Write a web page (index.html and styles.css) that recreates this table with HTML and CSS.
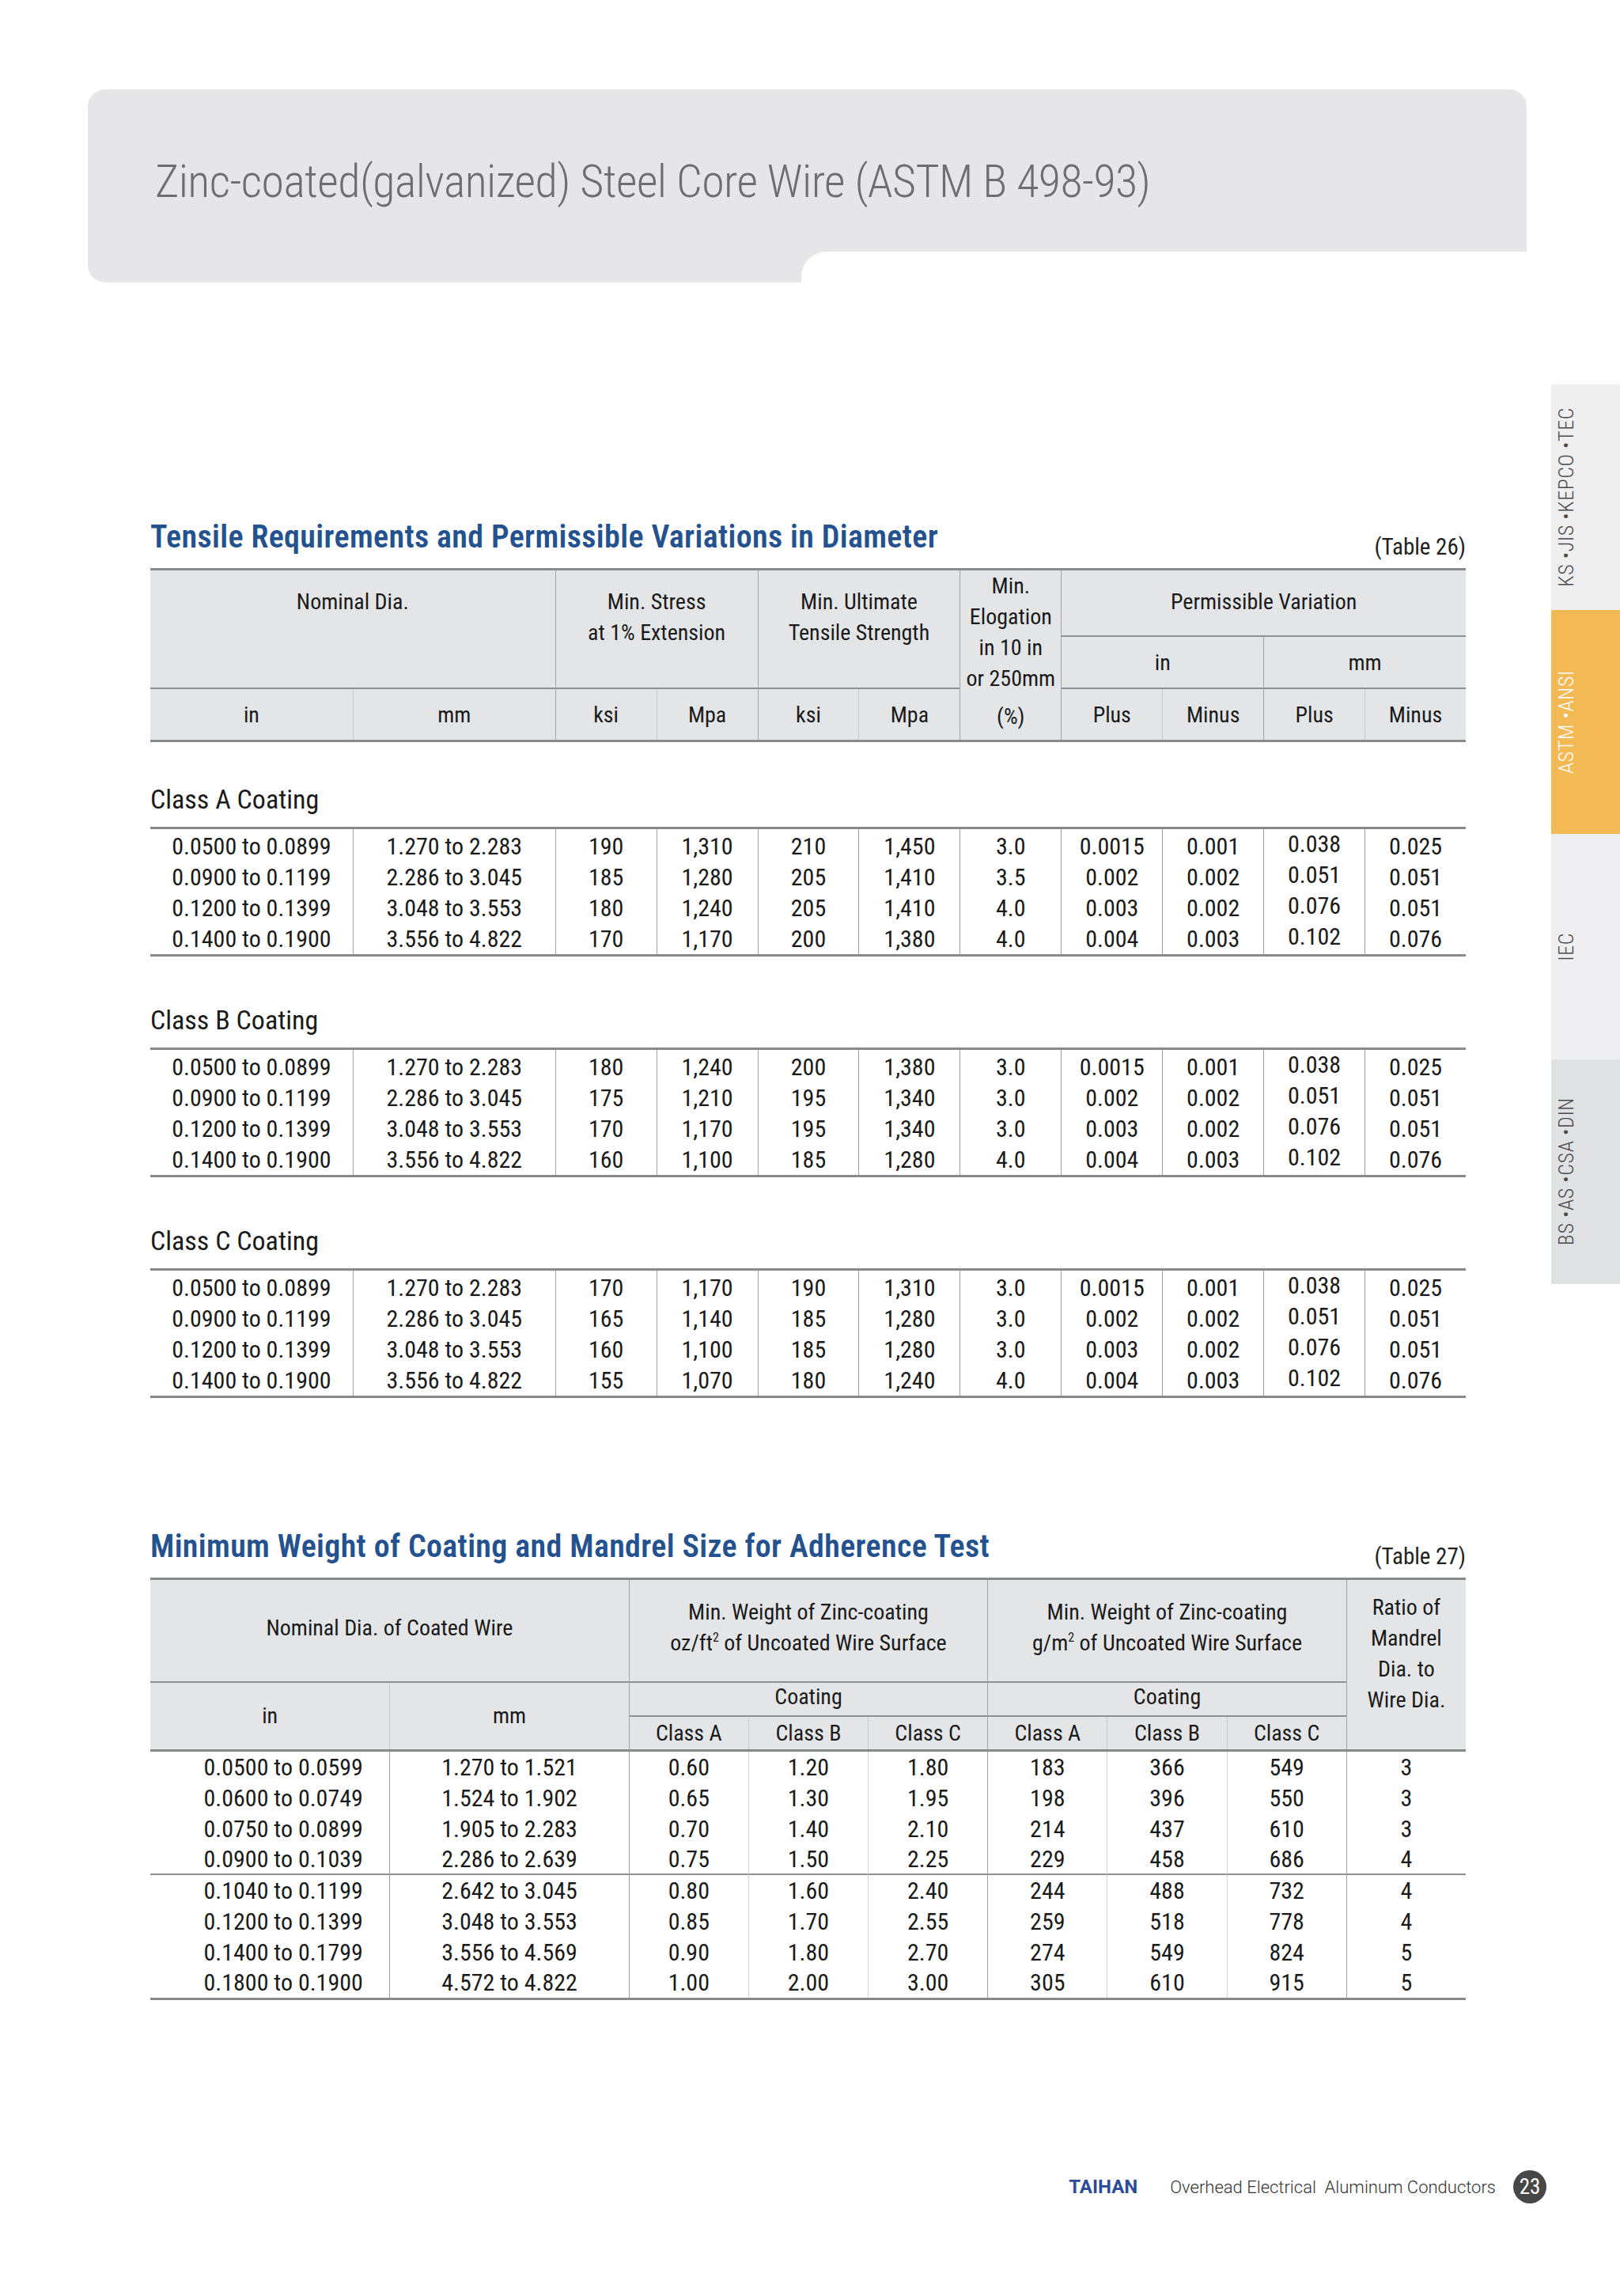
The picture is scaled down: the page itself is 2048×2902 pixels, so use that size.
FILE: index.html
```html
<!DOCTYPE html>
<html lang="en">
<head>
<meta charset="utf-8">
<title>Zinc-coated(galvanized) Steel Core Wire (ASTM B 498-93)</title>
<link rel="stylesheet" href="styles.css">
</head>
<body>
<div class="page">
  <main class="main">
    <header class="hero">
      <h1 class="hero-title">Zinc-coated(galvanized) Steel Core Wire (ASTM B 498-93)</h1>
    </header>

    <section class="sec sec1">
      <div class="sec-head">
        <h2 class="sec-title">Tensile Requirements and Permissible Variations in Diameter</h2>
        <span class="tbl-no">(Table 26)</span>
      </div>
      <table class="t t1 head">
        <colgroup><col class="w2"><col class="w2"><col class="w1"><col class="w1"><col class="w1"><col class="w1"><col class="w1"><col class="w1"><col class="w1"><col class="w1"><col class="w1"></colgroup>
        <tr class="r1">
          <th colspan="2" rowspan="2" class="first tall">Nominal Dia.</th>
          <th colspan="2" rowspan="2" class="tall">Min. Stress<br>at 1% Extension</th>
          <th colspan="2" rowspan="2" class="tall">Min. Ultimate<br>Tensile Strength</th>
          <th rowspan="3" class="elong">Min.<br>Elogation<br>in 10 in<br>or 250mm<span class="pct">(%)</span></th>
          <th colspan="4" class="pv">Permissible Variation</th>
        </tr>
        <tr class="r2">
          <th colspan="2" class="sub">in</th>
          <th colspan="2" class="sub">mm</th>
        </tr>
        <tr class="r3">
          <th class="first">in</th><th class="light">mm</th><th>ksi</th><th class="light">Mpa</th><th>ksi</th><th class="light">Mpa</th><th>Plus</th><th class="light">Minus</th><th>Plus</th><th class="light">Minus</th>
        </tr>
      </table>

      <div class="cls cls-a">Class A Coating</div>
      <table class="t t1 data">
        <colgroup><col class="w2"><col class="w2"><col class="w1"><col class="w1"><col class="w1"><col class="w1"><col class="w1"><col class="w1"><col class="w1"><col class="w1"><col class="w1"></colgroup>
        <tr><td>0.0500 to 0.0899</td><td>1.270 to 2.283</td><td>190</td><td>1,310</td><td>210</td><td>1,450</td><td>3.0</td><td>0.0015</td><td>0.001</td><td class="up"><span>0.038</span></td><td>0.025</td></tr>
        <tr><td>0.0900 to 0.1199</td><td>2.286 to 3.045</td><td>185</td><td>1,280</td><td>205</td><td>1,410</td><td>3.5</td><td>0.002</td><td>0.002</td><td class="up"><span>0.051</span></td><td>0.051</td></tr>
        <tr><td>0.1200 to 0.1399</td><td>3.048 to 3.553</td><td>180</td><td>1,240</td><td>205</td><td>1,410</td><td>4.0</td><td>0.003</td><td>0.002</td><td class="up"><span>0.076</span></td><td>0.051</td></tr>
        <tr><td>0.1400 to 0.1900</td><td>3.556 to 4.822</td><td>170</td><td>1,170</td><td>200</td><td>1,380</td><td>4.0</td><td>0.004</td><td>0.003</td><td class="up"><span>0.102</span></td><td>0.076</td></tr>
      </table>

      <div class="cls">Class B Coating</div>
      <table class="t t1 data">
        <colgroup><col class="w2"><col class="w2"><col class="w1"><col class="w1"><col class="w1"><col class="w1"><col class="w1"><col class="w1"><col class="w1"><col class="w1"><col class="w1"></colgroup>
        <tr><td>0.0500 to 0.0899</td><td>1.270 to 2.283</td><td>180</td><td>1,240</td><td>200</td><td>1,380</td><td>3.0</td><td>0.0015</td><td>0.001</td><td class="up"><span>0.038</span></td><td>0.025</td></tr>
        <tr><td>0.0900 to 0.1199</td><td>2.286 to 3.045</td><td>175</td><td>1,210</td><td>195</td><td>1,340</td><td>3.0</td><td>0.002</td><td>0.002</td><td class="up"><span>0.051</span></td><td>0.051</td></tr>
        <tr><td>0.1200 to 0.1399</td><td>3.048 to 3.553</td><td>170</td><td>1,170</td><td>195</td><td>1,340</td><td>3.0</td><td>0.003</td><td>0.002</td><td class="up"><span>0.076</span></td><td>0.051</td></tr>
        <tr><td>0.1400 to 0.1900</td><td>3.556 to 4.822</td><td>160</td><td>1,100</td><td>185</td><td>1,280</td><td>4.0</td><td>0.004</td><td>0.003</td><td class="up"><span>0.102</span></td><td>0.076</td></tr>
      </table>

      <div class="cls">Class C Coating</div>
      <table class="t t1 data">
        <colgroup><col class="w2"><col class="w2"><col class="w1"><col class="w1"><col class="w1"><col class="w1"><col class="w1"><col class="w1"><col class="w1"><col class="w1"><col class="w1"></colgroup>
        <tr><td>0.0500 to 0.0899</td><td>1.270 to 2.283</td><td>170</td><td>1,170</td><td>190</td><td>1,310</td><td>3.0</td><td>0.0015</td><td>0.001</td><td class="up"><span>0.038</span></td><td>0.025</td></tr>
        <tr><td>0.0900 to 0.1199</td><td>2.286 to 3.045</td><td>165</td><td>1,140</td><td>185</td><td>1,280</td><td>3.0</td><td>0.002</td><td>0.002</td><td class="up"><span>0.051</span></td><td>0.051</td></tr>
        <tr><td>0.1200 to 0.1399</td><td>3.048 to 3.553</td><td>160</td><td>1,100</td><td>185</td><td>1,280</td><td>3.0</td><td>0.003</td><td>0.002</td><td class="up"><span>0.076</span></td><td>0.051</td></tr>
        <tr><td>0.1400 to 0.1900</td><td>3.556 to 4.822</td><td>155</td><td>1,070</td><td>180</td><td>1,240</td><td>4.0</td><td>0.004</td><td>0.003</td><td class="up"><span>0.102</span></td><td>0.076</td></tr>
      </table>
    </section>

    <section class="sec sec2">
      <div class="sec-head">
        <h2 class="sec-title">Minimum Weight of Coating and Mandrel Size for Adherence Test</h2>
        <span class="tbl-no">(Table 27)</span>
      </div>
      <table class="t t2 head">
        <colgroup><col class="v2"><col class="v2"><col class="v1"><col class="v1"><col class="v1"><col class="v1"><col class="v1"><col class="v1"><col class="v1"></colgroup>
        <tr class="q1">
          <th colspan="2" class="first nom">Nominal Dia. of Coated Wire</th>
          <th colspan="3" class="mw">Min. Weight of Zinc-coating<br>oz/ft<sup>2</sup> of Uncoated Wire Surface</th>
          <th colspan="3" class="mw">Min. Weight of Zinc-coating<br>g/m<sup>2</sup> of Uncoated Wire Surface</th>
          <th rowspan="3" class="ratio">Ratio of<br>Mandrel<br>Dia. to<br>Wire Dia.</th>
        </tr>
        <tr class="q2">
          <th rowspan="2" class="first unit">in</th>
          <th rowspan="2" class="unit light">mm</th>
          <th colspan="3" class="coat">Coating</th>
          <th colspan="3" class="coat">Coating</th>
        </tr>
        <tr class="q3">
          <th>Class A</th><th class="light">Class B</th><th class="light">Class C</th>
          <th>Class A</th><th class="light">Class B</th><th class="light">Class C</th>
        </tr>
      </table>
      <table class="t t2 data">
        <colgroup><col class="v2"><col class="v2"><col class="v1"><col class="v1"><col class="v1"><col class="v1"><col class="v1"><col class="v1"><col class="v1"></colgroup>
        <tr><td>0.0500 to 0.0599</td><td>1.270 to 1.521</td><td>0.60</td><td class="light">1.20</td><td class="light">1.80</td><td>183</td><td class="light">366</td><td class="light">549</td><td>3</td></tr>
        <tr><td>0.0600 to 0.0749</td><td>1.524 to 1.902</td><td>0.65</td><td class="light">1.30</td><td class="light">1.95</td><td>198</td><td class="light">396</td><td class="light">550</td><td>3</td></tr>
        <tr><td>0.0750 to 0.0899</td><td>1.905 to 2.283</td><td>0.70</td><td class="light">1.40</td><td class="light">2.10</td><td>214</td><td class="light">437</td><td class="light">610</td><td>3</td></tr>
        <tr class="split"><td>0.0900 to 0.1039</td><td>2.286 to 2.639</td><td>0.75</td><td class="light">1.50</td><td class="light">2.25</td><td>229</td><td class="light">458</td><td class="light">686</td><td>4</td></tr>
        <tr><td>0.1040 to 0.1199</td><td>2.642 to 3.045</td><td>0.80</td><td class="light">1.60</td><td class="light">2.40</td><td>244</td><td class="light">488</td><td class="light">732</td><td>4</td></tr>
        <tr><td>0.1200 to 0.1399</td><td>3.048 to 3.553</td><td>0.85</td><td class="light">1.70</td><td class="light">2.55</td><td>259</td><td class="light">518</td><td class="light">778</td><td>4</td></tr>
        <tr><td>0.1400 to 0.1799</td><td>3.556 to 4.569</td><td>0.90</td><td class="light">1.80</td><td class="light">2.70</td><td>274</td><td class="light">549</td><td class="light">824</td><td>5</td></tr>
        <tr class="last"><td>0.1800 to 0.1900</td><td>4.572 to 4.822</td><td>1.00</td><td class="light">2.00</td><td class="light">3.00</td><td>305</td><td class="light">610</td><td class="light">915</td><td>5</td></tr>
      </table>
    </section>

    <footer class="foot">
      <span class="brand">TAIHAN</span>
      <span class="ftxt">Overhead Electrical&nbsp; Aluminum Conductors</span>
      <span class="pg">23</span>
    </footer>
  </main>

  <nav class="side">
    <div class="tab tab1"><span>KS •JIS •KEPCO •TEC</span></div>
    <div class="tab tab2"><span>ASTM •ANSI</span></div>
    <div class="tab tab3"><span>IEC</span></div>
    <div class="tab tab4"><span>BS •AS •CSA •DIN</span></div>
  </nav>
</div>
</body>
</html>
```

FILE: styles.css
```css
* { box-sizing: border-box; }

html, body { margin: 0; padding: 0; background: #ffffff; }

body {
  font-family: "Roboto", "Noto Sans", sans-serif;
  font-stretch: 75%;
  color: #1a1a1a;
}

.page {
  display: flex;
  width: 2048px;
  min-height: 2902px;
}

.main {
  width: 1961px;
  flex: none;
}

/* ---------- hero ---------- */
.hero {
  position: relative;
  margin: 113px 31px 0 111px;
  height: 244px;
  background: #e6e6e8;
  border-radius: 22px 22px 0 22px;
  padding: 81px 0 0 85px;
}
.hero::after {
  content: "";
  position: absolute;
  right: 0;
  bottom: 0;
  width: 917px;
  height: 39px;
  background: #ffffff;
  border-top-left-radius: 32px;
}
.hero-title {
  margin: 0;
  font-size: 58px;
  line-height: 70px;
  font-weight: 300;
  letter-spacing: -0.6px;
  color: #6e6e70;
}

/* ---------- sections ---------- */
.sec {
  margin-left: 190px;
  width: 1663px;
}
.sec1 { margin-top: 298px; }
.sec2 { margin-top: 164px; }

.sec-head {
  display: flex;
  justify-content: space-between;
  align-items: flex-end;
  margin-bottom: 15px;
}
.sec-title {
  margin: 0;
  font-size: 40px;
  line-height: 48px;
  font-weight: 600;
  letter-spacing: 0.35px;
  color: #24528f;
}
.tbl-no {
  font-size: 29px;
  line-height: 24px;
  color: #222222;
}

.cls {
  font-size: 34px;
  line-height: 40px;
  margin: 60px 0 15px;
  color: #1a1a1a;
}
.cls-a { margin-top: 52px; }

/* ---------- tables ---------- */
.t {
  width: 1663px;
  table-layout: fixed;
  border-collapse: separate;
  border-spacing: 0;
  text-align: center;
}
.w2 { width: 15.3846%; }
.w1 { width: 7.6923%; }
.v2 { width: 18.1818%; }
.v1 { width: 9.0909%; }

.t th {
  font-weight: 400;
  font-size: 28px;
  line-height: 39px;
  padding: 0;
  color: #1a1a1a;
  border-left: 1px solid #a3a4a6;
  white-space: nowrap;
}
.t th.first { border-left: none; }
.t th.light { border-left-color: #c9cacc; }

.head {
  background: #e4e5e7;
  border-top: 3px solid #88898b;
  border-bottom: 3px solid #88898b;
}

/* table 26 header */
.t1.head .r1 { height: 84px; }
.t1.head .r2 { height: 66px; }
.t1.head .r3 { height: 64px; }
.t1.head .r1 th { vertical-align: top; padding-top: 20px; }
.t1.head .tall { border-bottom: 2px solid #8f9092; }
.t1.head .pv { border-bottom: 2px solid #8f9092; }
.t1.head .sub { vertical-align: middle; border-bottom: 2px solid #8f9092; }
.t1.head .r3 th { vertical-align: middle; }
.t1.head .r1 th.elong { padding-top: 0; }
.pct { display: block; margin-top: 9px; }

/* data */
.t td {
  font-size: 30px;
  line-height: 39px;
  padding: 0;
  color: #1a1a1a;
  border-left: 1px solid #9fa0a2;
  white-space: nowrap;
}
.t td:first-child { border-left: none; }
.t td.light { border-left-color: #d3d4d6; }

.t1.data {
  border-top: 3px solid #88898b;
  border-bottom: 3px solid #88898b;
}
.t1.data tr:first-child td { padding-top: 2px; }
.up span { vertical-align: 3px; line-height: 30px; }

/* table 27 header */
.t2.head .q1 { height: 130px; }
.t2.head .q2 { height: 43px; }
.t2.head .q3 { height: 41px; }
.t2.head .q1 th { vertical-align: top; border-bottom: 2px solid #8f9092; }
.t2.head .q1 th.nom { padding-top: 41px; }
.t2.head .q1 th.mw { padding-top: 21px; }
.t2.head .q1 th.ratio { padding-top: 15px; border-bottom: none; }
.t2.head .coat { vertical-align: top; line-height: 36px; border-bottom: 2px solid #8f9092; }
.t2.head .unit { vertical-align: top; padding-top: 22px; }
.t2.head .q3 th { vertical-align: middle; }
.t2.head sup { font-size: 16px; line-height: 0; vertical-align: 11px; }

.t2.data { border-bottom: 3px solid #88898b; }
.t2.data td:first-child { padding-left: 34px; }
.t2.data .split td { border-bottom: 2px solid #8f9092; line-height: 37px; }
.t2.data .last td { line-height: 38px; }

/* ---------- footer ---------- */
.foot {
  display: flex;
  justify-content: flex-end;
  align-items: center;
  margin-top: 215px;
  padding-right: 6px;
}
.brand {
  font-size: 24px;
  font-weight: 700;
  font-stretch: 90%;
  color: #2d4b9b;
  margin-right: 41px;
}
.ftxt {
  font-size: 22px;
  font-weight: 300;
  font-stretch: 88%;
  color: #333333;
}
.pg {
  width: 42px;
  height: 42px;
  border-radius: 50%;
  background: #474747;
  color: #ffffff;
  font-size: 27px;
  display: flex;
  align-items: center;
  justify-content: center;
  margin-left: 22px;
}

/* ---------- side tabs ---------- */
.side {
  width: 87px;
  flex: none;
  padding-top: 486px;
}
.tab {
  display: flex;
  align-items: center;
  padding-left: 6px;
  color: #4a4a4c;
}
.tab span {
  writing-mode: vertical-rl;
  transform: rotate(180deg);
  font-size: 26px;
  line-height: 26px;
  font-weight: 300;
  letter-spacing: 0.6px;
  white-space: nowrap;
}
.tab1 { height: 285px; background: #efeff0; }
.tab2 { height: 283px; background: #f2b955; color: #ffffff; }
.tab3 { height: 285px; background: #efeff1; }
.tab4 { height: 284px; background: #e0e1e3; }
```
